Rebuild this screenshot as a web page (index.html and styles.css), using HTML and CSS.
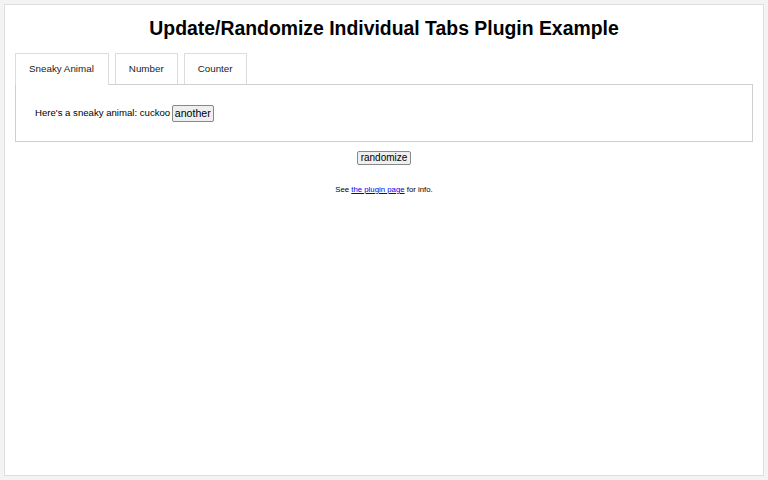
FILE: index.html
```html
<!DOCTYPE html>
<html lang="en">
<head>
    <meta charset="UTF-8">
    <title>Update/Randomize Individual Tabs Plugin Example</title>
    <link rel="stylesheet" href="styles.css">
</head>
<body>
    <div class="page">
        <h1>Update/Randomize Individual Tabs Plugin Example</h1>
        <div class="tabs">
            <ul class="tab-list">
                <li class="tab active">Sneaky Animal</li>
                <li class="tab">Number</li>
                <li class="tab">Counter</li>
            </ul>
            <div class="tab-panel">
                Here's a sneaky animal: <span id="animal">cuckoo</span>
                <button class="btn btn-another">another</button>
            </div>
        </div>
        <div class="actions">
            <button class="btn">randomize</button>
        </div>
        <p class="info">See <a href="#">the plugin page</a> for info.</p>
    </div>
</body>
</html>
```

FILE: styles.css
```css
html, body {
    height: 100%;
}

body {
    margin: 0;
    padding: 4px 4px;
    box-sizing: border-box;
    background-color: #f3f3f3;
    font-family: "Liberation Sans", Arial, sans-serif;
    color: #000;
}

.page {
    height: 100%;
    box-sizing: border-box;
    background-color: #fff;
    border: 1px solid #dedede;
    padding: 12px 10px;
}

h1 {
    margin: 0 0 13px;
    font-size: 19.4px;
    line-height: 23px;
    text-align: center;
}

.tab-list {
    display: flex;
    gap: 6px;
    list-style: none;
    margin: 0;
    padding: 0;
}

.tab {
    font-size: 9.8px;
    line-height: 12px;
    padding: 9px 13px;
    border: 1px solid #dcdcdc;
    border-bottom: none;
    background-color: #fff;
    color: #222;
}

.tab.active {
    padding-right: 14px;
    padding-bottom: 10px;
    margin-bottom: -1px;
    position: relative;
}

.tab-panel {
    border: 1px solid #cfcfcf;
    padding: 19px 19px;
    font-size: 9.6px;
    line-height: 17px;
}

.btn {
    font-family: "Liberation Sans", Arial, sans-serif;
    font-size: 10px;
    line-height: 12px;
    padding: 0 3px;
    border: 1px solid #888;
    border-radius: 2px;
    background-color: #efefef;
    color: #000;
}

.btn-another {
    font-size: 10.6px;
    line-height: 13px;
    padding: 1px 2px;
    margin-left: -1px;
    vertical-align: middle;
}

.actions {
    text-align: center;
    margin-top: 9px;
    font-size: 10px;
    line-height: 14px;
}

.actions .btn {
    vertical-align: top;
}

.info {
    margin: 20px 0 0;
    text-align: center;
    font-size: 7.8px;
}

.info a {
    color: #00e;
}
```
